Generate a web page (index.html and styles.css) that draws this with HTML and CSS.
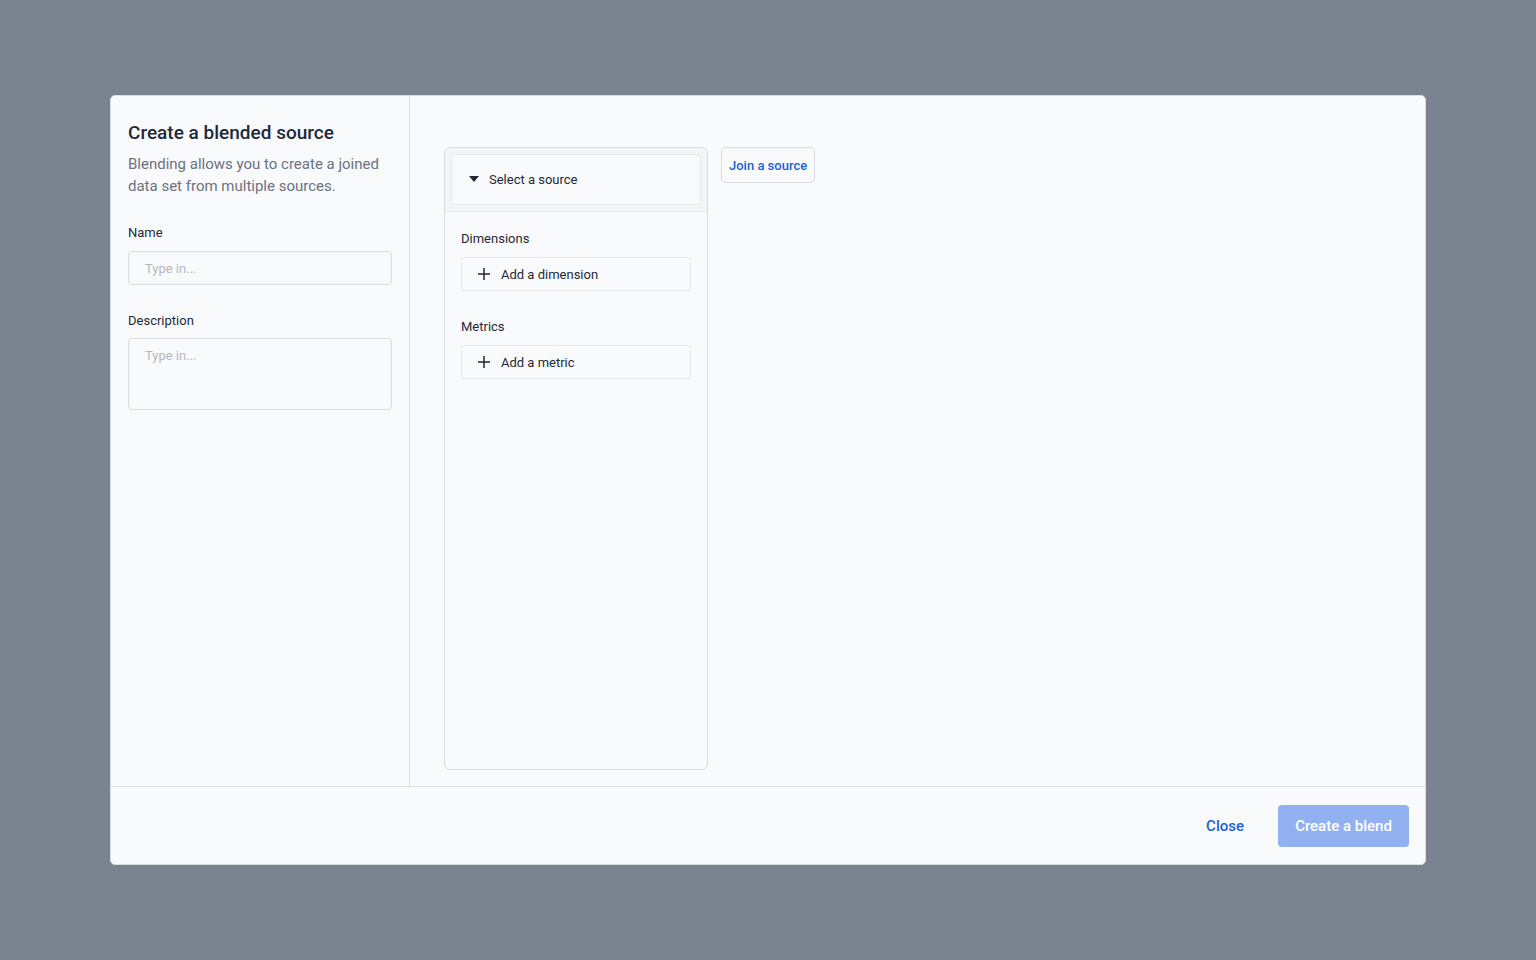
FILE: index.html
```html
<!DOCTYPE html>
<html lang="en">
<head>
<meta charset="utf-8">
<title>Create a blended source</title>
<link rel="stylesheet" href="styles.css">
</head>
<body>
<div class="overlay">
  <div class="modal">
    <div class="modal-body">
      <aside class="sidebar">
        <h1 class="title">Create a blended source</h1>
        <p class="subtitle">Blending allows you to create a joined data set from multiple sources.</p>
        <label class="field-label">Name</label>
        <input class="input" type="text" placeholder="Type in...">
        <label class="field-label desc-label">Description</label>
        <textarea class="textarea" placeholder="Type in..."></textarea>
      </aside>
      <main class="canvas">
        <div class="source-card">
          <div class="card-head">
            <div class="select">
              <svg class="caret" width="10" height="6" viewBox="0 0 10 6"><path d="M0 0h10L5 6z" fill="#1f2937"/></svg>
              <span>Select a source</span>
            </div>
          </div>
          <div class="card-body">
            <div class="section-label">Dimensions</div>
            <button class="add-btn"><svg width="12" height="12" viewBox="0 0 12 12"><path d="M6 0v12M0 6h12" stroke="#1f2937" stroke-width="1.5"/></svg><span>Add a dimension</span></button>
            <div class="section-label metrics-label">Metrics</div>
            <button class="add-btn"><svg width="12" height="12" viewBox="0 0 12 12"><path d="M6 0v12M0 6h12" stroke="#1f2937" stroke-width="1.5"/></svg><span>Add a metric</span></button>
          </div>
        </div>
        <button class="join-btn">Join a source</button>
      </main>
    </div>
    <footer class="modal-footer">
      <button class="close-btn">Close</button>
      <button class="primary-btn">Create a blend</button>
    </footer>
  </div>
</div>
</body>
</html>
```

FILE: styles.css
```css
* { box-sizing: border-box; }
html, body { margin: 0; padding: 0; }
body {
  font-family: Roboto, "Liberation Sans", sans-serif;
  background: #7a8390;
  width: 1536px;
  height: 960px;
  overflow: hidden;
}
.overlay {
  padding: 95px 110px 0 110px;
}
.modal {
  width: 1316px;
  height: 770px;
  background: #f9fafc;
  border: 1px solid #d9dde2;
  border-radius: 5px;
  display: flex;
  flex-direction: column;
  overflow: hidden;
}
.modal-body {
  flex: 1;
  display: flex;
  min-height: 0;
}
.sidebar {
  width: 299px;
  border-right: 1px solid #dcdfe3;
  padding: 24px 16px 0 17px;
  display: flex;
  flex-direction: column;
}
.title {
  margin: 0;
  font-size: 19px;
  font-weight: 500;
  color: #1e293b;
  line-height: 26px;
}
.subtitle {
  margin: 7px 0 0;
  font-size: 15px;
  line-height: 22px;
  color: #6b7280;
}
.field-label {
  margin-top: 27px;
  font-size: 13px;
  color: #1f2937;
  line-height: 18px;
}
.desc-label { margin-top: 27px; }
.input, .textarea {
  margin-top: 9px;
  width: 264px;
  border: 1px solid #d8dbe0;
  border-radius: 4px;
  background: #f9fafc;
  font-family: inherit;
  font-size: 13px;
  color: #1f2937;
  padding: 0 16px;
}
.input { height: 34px; }
.textarea {
  margin-top: 8px;
  height: 72px;
  padding-top: 9px;
  resize: none;
  display: block;
}
.input::placeholder, .textarea::placeholder { color: #b3b8bf; }
.canvas {
  flex: 1;
  display: flex;
  align-items: flex-start;
  gap: 13px;
  padding: 51px 0 17px 34px;
  height: 100%;
}
.source-card {
  width: 264px;
  height: 623px;
  border: 1px solid #d8dbe0;
  border-radius: 6px;
  background: #f9fafc;
  overflow: hidden;
}
.card-head {
  background: #f3f4f5;
  padding: 6px;
  border-bottom: 1px solid #e2e4e8;
}
.select {
  height: 51px;
  background: #f9fafc;
  border: 1px solid #e6e8eb;
  border-radius: 5px;
  display: flex;
  align-items: center;
  padding-left: 17px;
  gap: 10px;
  font-size: 13px;
  color: #1f2937;
  font-weight: 400;
}
.caret { margin-top: -2px; }
.card-body {
  padding: 19px 16px 0 16px;
}
.section-label {
  font-size: 13px;
  color: #1f2937;
  line-height: 16px;
}
.metrics-label { margin-top: 28px; }
.add-btn {
  margin-top: 10px;
  width: 230px;
  height: 34px;
  border: 1px solid #e6e8eb;
  border-radius: 3px;
  background: #f9fafc;
  display: flex;
  align-items: center;
  gap: 11px;
  padding: 0 0 0 16px;
  font-family: inherit;
  font-size: 13px;
  color: #1f2937;
  cursor: pointer;
}
.join-btn {
  height: 36px;
  padding: 0 7px;
  border: 1px solid #d8dbe0;
  border-radius: 5px;
  background: #f9fafc;
  color: #1d5fd8;
  font-family: inherit;
  font-size: 13px;
  font-weight: 500;
  cursor: pointer;
}
.modal-footer {
  height: 78px;
  flex: none;
  border-top: 1px solid #dcdfe3;
  display: flex;
  align-items: center;
  justify-content: flex-end;
  padding-right: 16px;
  gap: 16px;
}
.close-btn {
  background: none;
  border: none;
  color: #1d5fd8;
  font-family: inherit;
  font-size: 15px;
  font-weight: 500;
  padding: 0 18px;
  height: 42px;
  cursor: pointer;
}
.primary-btn {
  height: 42px;
  width: 131px;
  border: none;
  border-radius: 4px;
  background: #91b1f1;
  color: #ffffff;
  font-family: inherit;
  font-size: 15px;
  font-weight: 500;
  cursor: pointer;
}
```
